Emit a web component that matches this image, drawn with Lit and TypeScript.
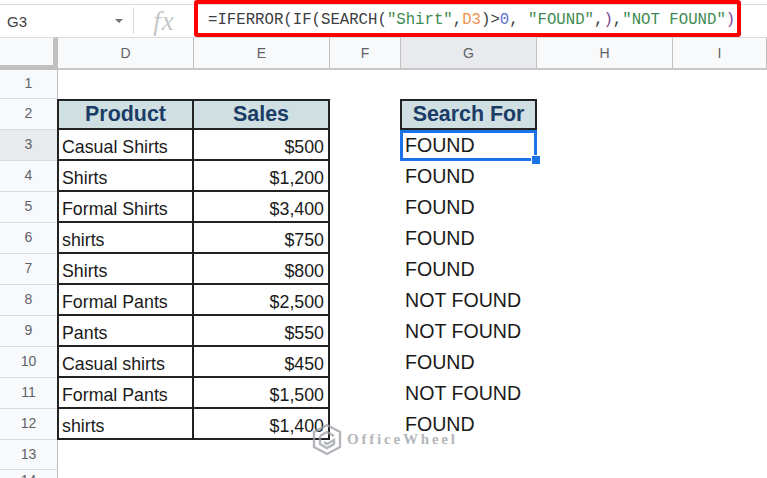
import { LitElement, html, css } from "lit";
import { customElement } from "lit/decorators.js";

const products: [string, string][] = [
  ["Casual Shirts", "$500"],
  ["Shirts", "$1,200"],
  ["Formal Shirts", "$3,400"],
  ["shirts", "$750"],
  ["Shirts", "$800"],
  ["Formal Pants", "$2,500"],
  ["Pants", "$550"],
  ["Casual shirts", "$450"],
  ["Formal Pants", "$1,500"],
  ["shirts", "$1,400"],
];

const results = ["FOUND", "FOUND", "FOUND", "FOUND", "FOUND", "NOT FOUND", "NOT FOUND", "FOUND", "NOT FOUND", "FOUND"];

@customElement("app-root")
export class AppRoot extends LitElement {
  static styles = css`
    :host {
      display: block;
      position: relative;
      width: 767px;
      height: 478px;
      overflow: hidden;
      background: #fff;
      font-family: "Liberation Sans", Arial, sans-serif;
    }

    .topbar {
      margin-top: 4px;
      border-top: 1px solid #dadce0;
      display: flex;
      align-items: stretch;
      box-sizing: border-box;
      height: 33px;
      background: #fff;
    }

    .namebox {
      width: 133px;
      box-sizing: border-box;
      display: flex;
      align-items: center;
      padding: 0 8px 0 7px;
      font-size: 15px;
      color: #3c4043;
      justify-content: space-between;
    }

    .caret {
      width: 0;
      height: 0;
      border-left: 4px solid transparent;
      border-right: 4px solid transparent;
      border-top: 4px solid #70757a;
      margin-right: 2px;
    }

    .sep {
      width: 1px;
      background: #dadce0;
      margin: 2px 0 3px;
    }

    .fx {
      width: 60px;
      display: flex;
      align-items: center;
      justify-content: center;
      font-family: "Liberation Serif", serif;
      font-style: italic;
      font-size: 27px;
      letter-spacing: 1px;
      color: #c4c7ca;
    }

    .formula {
      width: 547px;
      flex: none;
      box-sizing: border-box;
      margin: -5px 0 0 0;
      height: 37px;
      border: 4px solid #ff0000;
      border-radius: 3px;
      padding-left: 10px;
      font-family: "Liberation Mono", monospace;
      font-size: 15.7px;
      line-height: 33px;
      white-space: pre;
      color: #3c4043;
    }

    .formula .str { color: #3d8b52; }
    .formula .ref { color: #f0924f; }
    .formula .num { color: #5b6fd0; }
    .formula .par { color: #7b4a9c; }

    .grid {
      display: grid;
      grid-template-columns: 58px 136px 136px 71px 136px 136px 94px;
      grid-template-rows: 33px 29px repeat(11, 31px) 30px 22px;
    }

    .cell {
      box-sizing: border-box;
      min-width: 0;
    }

    .col {
      background: #f8f9fa;
      border-right: 1px solid #c0c0c0;
      border-bottom: 2px solid #c8c8c8;
      border-top: 1px solid #dadce0;
      padding-bottom: 1px;
      display: flex;
      align-items: center;
      justify-content: center;
      font-size: 14px;
      color: #5f6368;
    }

    .col.corner {
      border-right: 5px solid #c0c0c0;
      border-bottom: 5px solid #c0c0c0;
    }

    .col.active {
      background: #e8eaed;
    }

    .row {
      background: #f8f9fa;
      border-right: 1px solid #c0c0c0;
      border-bottom: 1px solid #dadce0;
      padding-bottom: 2px;
      display: flex;
      align-items: center;
      justify-content: center;
      font-size: 14px;
      color: #5f6368;
    }

    .row.active {
      background: #e8eaed;
    }

    .data {
      font-size: 17.8px;
      color: #1a1a1a;
      display: flex;
      align-items: center;
      padding: 6px 4px 0 3px;
      white-space: nowrap;
    }

    .boxed {
      border-right: 2px solid #222;
      border-bottom: 2px solid #222;
    }

    .boxed.first {
      border-left: 2px solid #222;
      margin-left: -1px;
    }

    .right {
      justify-content: flex-end;
    }

    .head {
      background: #cfdfe2;
      border-top: 2px solid #222;
      justify-content: center;
      font-weight: bold;
      font-size: 21.4px;
      color: #1b3c66;
      padding: 0;
    }

    .result {
      font-size: 19.6px;
      padding: 0 0 0 4px;
    }

    .selected {
      position: relative;
      border: 3px solid #1a73e8;
      margin-left: -1px;
      padding: 0 0 0 2px;
    }

    .selected::after {
      content: "";
      position: absolute;
      right: -7px;
      bottom: -7px;
      width: 8px;
      height: 8px;
      background: #1a73e8;
      border: 1px solid #fff;
    }

    .watermark {
      position: absolute;
      left: 312px;
      top: 423px;
      display: flex;
      align-items: center;
      gap: 5px;
      opacity: 0.75;
      font-family: "Liberation Serif", serif;
      font-weight: bold;
      font-size: 15px;
      letter-spacing: 2.8px;
      color: #9aa0a6;
    }
  `;

  private rowCells(n: number) {
    const i = n - 3;
    const inTable = i >= 0 && i < products.length;
    return html`
      <div class="cell row ${n === 3 ? "active" : ""}">${n}</div>
      ${n === 2
        ? html`
            <div class="cell data boxed first head">Product</div>
            <div class="cell data boxed head">Sales</div>
          `
        : inTable
          ? html`
              <div class="cell data boxed first">${products[i][0]}</div>
              <div class="cell data boxed right">${products[i][1]}</div>
            `
          : html`<div class="cell"></div><div class="cell"></div>`}
      <div class="cell"></div>
      ${n === 2
        ? html`<div class="cell data boxed first head">Search For</div>`
        : inTable
          ? html`<div class="cell data result ${i === 0 ? "selected" : ""}">${results[i]}</div>`
          : html`<div class="cell"></div>`}
      <div class="cell"></div>
      <div class="cell"></div>
    `;
  }

  render() {
    const rows = Array.from({ length: 14 }, (_, k) => k + 1);
    return html`
      <div class="topbar">
        <div class="namebox"><span>G3</span><span class="caret"></span></div>
        <div class="sep"></div>
        <div class="fx">fx</div>
        <div class="formula">=IFERROR(IF(SEARCH(<span class="str">"Shirt"</span>,<span class="ref">D3</span>)&gt;<span class="num">0</span>, <span class="str">"FOUND"</span>,<span class="par">)</span>,<span class="str">"NOT FOUND"</span><span class="par">)</span></div>
      </div>
      <div class="grid">
        <div class="cell col corner"></div>
        ${["D", "E", "F", "G", "H", "I"].map(
          (c) => html`<div class="cell col ${c === "G" ? "active" : ""}">${c}</div>`,
        )}
        ${rows.map((n) => this.rowCells(n))}
      </div>
      <div class="watermark">
        <svg width="30" height="33" viewBox="0 0 30 33" fill="none" stroke="#9aa0a6" stroke-width="2.4">
          <path d="M15 2 28 9v15l-13 7-13-7V9z" />
          <path d="M8 13l7-4 7 4M8 13v8l7 4 7-4v-4l-7 4-3-2" />
        </svg>
        <span>OfficeWheel</span>
      </div>
    `;
  }
}
